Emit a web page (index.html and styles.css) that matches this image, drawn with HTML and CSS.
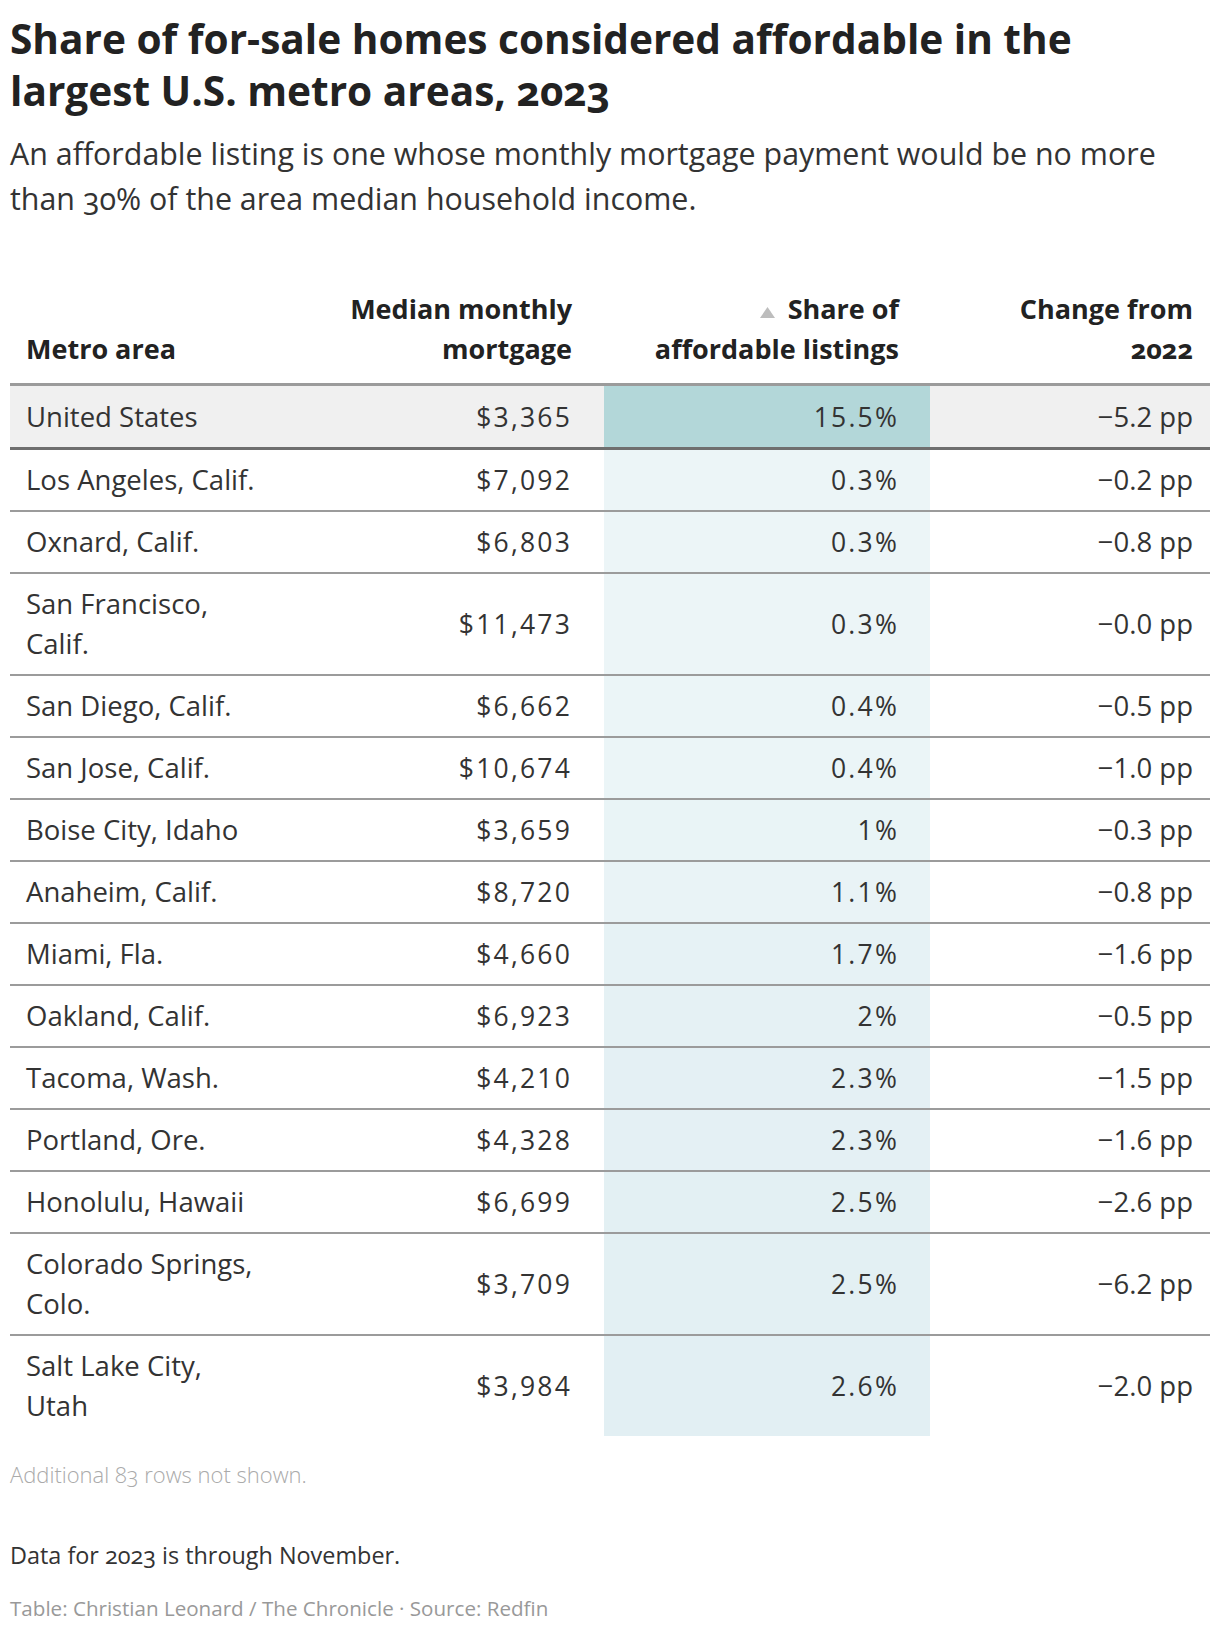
FILE: index.html
```html
<!DOCTYPE html>
<html lang="en">
<head>
<meta charset="utf-8">
<title>Share of for-sale homes considered affordable</title>
<link rel="stylesheet" href="styles.css">
</head>
<body>
<div class="chart">
  <h1 class="title">Share of for-sale homes considered affordable in the largest U.S. metro areas, 2023</h1>
  <p class="desc">An affordable listing is one whose monthly mortgage payment would be no more than 30% of the area median household income.</p>
  <table class="tbl">
    <colgroup>
      <col class="w-name"><col class="w-num"><col class="w-share"><col class="w-chg">
    </colgroup>
    <thead>
      <tr>
        <th class="c-name">Metro area</th>
        <th class="c-num">Median monthly<br>mortgage</th>
        <th class="c-share"><svg class="arrow" width="15" height="11" viewBox="0 0 15 11" aria-hidden="true"><polygon points="7.5,0 15,11 0,11" fill="#bdbdbd"/></svg>Share of<br>affordable listings</th>
        <th class="c-chg">Change from<br><span class="yr">2022</span></th>
      </tr>
    </thead>
    <tbody>
      <tr class="hl">
        <td class="c-name">United States</td>
        <td class="c-num num">$3,365</td>
        <td class="c-share num" style="background:#b3d7d9">15.5%</td>
        <td class="c-chg">&minus;5.2 pp</td>
      </tr>
      <tr>
        <td class="c-name">Los Angeles, Calif.</td>
        <td class="c-num num">$7,092</td>
        <td class="c-share num" style="background:#ecf5f7">0.3%</td>
        <td class="c-chg">&minus;0.2 pp</td>
      </tr>
      <tr>
        <td class="c-name">Oxnard, Calif.</td>
        <td class="c-num num">$6,803</td>
        <td class="c-share num" style="background:#ecf5f7">0.3%</td>
        <td class="c-chg">&minus;0.8 pp</td>
      </tr>
      <tr>
        <td class="c-name">San Francisco,<br>Calif.</td>
        <td class="c-num num">$11,473</td>
        <td class="c-share num" style="background:#ecf5f7">0.3%</td>
        <td class="c-chg">&minus;0.0 pp</td>
      </tr>
      <tr>
        <td class="c-name">San Diego, Calif.</td>
        <td class="c-num num">$6,662</td>
        <td class="c-share num" style="background:#ebf5f7">0.4%</td>
        <td class="c-chg">&minus;0.5 pp</td>
      </tr>
      <tr>
        <td class="c-name">San Jose, Calif.</td>
        <td class="c-num num">$10,674</td>
        <td class="c-share num" style="background:#ebf5f7">0.4%</td>
        <td class="c-chg">&minus;1.0 pp</td>
      </tr>
      <tr>
        <td class="c-name">Boise City, Idaho</td>
        <td class="c-num num">$3,659</td>
        <td class="c-share num" style="background:#e9f4f6">1%</td>
        <td class="c-chg">&minus;0.3 pp</td>
      </tr>
      <tr>
        <td class="c-name">Anaheim, Calif.</td>
        <td class="c-num num">$8,720</td>
        <td class="c-share num" style="background:#e9f3f6">1.1%</td>
        <td class="c-chg">&minus;0.8 pp</td>
      </tr>
      <tr>
        <td class="c-name">Miami, Fla.</td>
        <td class="c-num num">$4,660</td>
        <td class="c-share num" style="background:#e6f2f5">1.7%</td>
        <td class="c-chg">&minus;1.6 pp</td>
      </tr>
      <tr>
        <td class="c-name">Oakland, Calif.</td>
        <td class="c-num num">$6,923</td>
        <td class="c-share num" style="background:#e5f1f4">2%</td>
        <td class="c-chg">&minus;0.5 pp</td>
      </tr>
      <tr>
        <td class="c-name">Tacoma, Wash.</td>
        <td class="c-num num">$4,210</td>
        <td class="c-share num" style="background:#e4f0f4">2.3%</td>
        <td class="c-chg">&minus;1.5 pp</td>
      </tr>
      <tr>
        <td class="c-name">Portland, Ore.</td>
        <td class="c-num num">$4,328</td>
        <td class="c-share num" style="background:#e4f0f4">2.3%</td>
        <td class="c-chg">&minus;1.6 pp</td>
      </tr>
      <tr>
        <td class="c-name">Honolulu, Hawaii</td>
        <td class="c-num num">$6,699</td>
        <td class="c-share num" style="background:#e3f0f3">2.5%</td>
        <td class="c-chg">&minus;2.6 pp</td>
      </tr>
      <tr>
        <td class="c-name">Colorado Springs,<br>Colo.</td>
        <td class="c-num num">$3,709</td>
        <td class="c-share num" style="background:#e3f0f3">2.5%</td>
        <td class="c-chg">&minus;6.2 pp</td>
      </tr>
      <tr>
        <td class="c-name">Salt Lake City,<br>Utah</td>
        <td class="c-num num">$3,984</td>
        <td class="c-share num" style="background:#e2eff3">2.6%</td>
        <td class="c-chg">&minus;2.0 pp</td>
      </tr>
    </tbody>
  </table>
  <p class="more">Additional 83 rows not shown.</p>
  <p class="notes">Data for 2023 is through November.</p>
  <p class="source">Table: Christian Leonard / The Chronicle &middot; Source: Redfin</p>
</div>
</body>
</html>
```

FILE: styles.css
```css
html, body {
  margin: 0;
  padding: 0;
  background: #ffffff;
}

.chart {
  padding: 13px 10px 0 10px;
  font-family: "Open Sans", "Noto Sans", Arial, sans-serif;
  color: #333333;
}

.title {
  margin: 0;
  font-size: 40.6px;
  line-height: 52px;
  font-weight: 700;
  color: #222222;
  font-variant-numeric: oldstyle-nums;
}

.desc {
  margin: 14px 0 0 0;
  max-width: 1180px;
  font-size: 30.4px;
  line-height: 45px;
  font-weight: 400;
  color: #333333;
  font-variant-numeric: oldstyle-nums;
}

.tbl {
  margin-top: 58px;
  width: 1200px;
  border-collapse: collapse;
  table-layout: fixed;
  font-size: 27.5px;
}

.w-name { width: 280px; }
.w-num { width: 314px; }
.w-share { width: 326px; }
.w-chg { width: 280px; }

.tbl th {
  font-size: 27px;
  font-weight: 700;
  color: #222222;
  line-height: 40px;
  padding: 10px 0 14px 0;
  vertical-align: bottom;
  border-bottom: 3px solid #9b9b9b;
}

.yr {
  font-variant-numeric: oldstyle-nums;
}

.tbl td {
  line-height: 40px;
  padding: 10px 0;
  vertical-align: middle;
  border-bottom: 2px solid #9b9b9b;
  color: #333333;
}

.tbl tbody tr:last-child td {
  border-bottom: none;
}

.tbl tr.hl td {
  background: #f0f0f0;
  border-bottom: 3px solid #6f6f6f;
  padding: 11px 0 10px 0;
}

.c-name {
  text-align: left;
  padding-left: 16px !important;
}

.c-num {
  text-align: right;
  padding-right: 32px !important;
}

.c-share {
  text-align: right;
  padding-right: 31px !important;
}

.c-chg {
  text-align: right;
  padding-right: 17px !important;
}

.num {
  font-size: 26.5px;
  letter-spacing: 2.2px;
  font-variant-numeric: tabular-nums lining-nums;
}

.arrow {
  display: inline-block;
  vertical-align: 1px;
  margin-right: 13px;
}

.more {
  margin: 24px 0 0 0;
  font-size: 22px;
  line-height: 28px;
  color: #aaaaaa;
  font-weight: 300;
  font-variant-numeric: oldstyle-nums;
}

.notes {
  margin: 52px 0 0 0;
  font-size: 23.4px;
  line-height: 30px;
  color: #333333;
  font-variant-numeric: oldstyle-nums;
}

.source {
  margin: 24px 0 0 0;
  font-size: 20.6px;
  line-height: 28px;
  color: #999999;
}
```
